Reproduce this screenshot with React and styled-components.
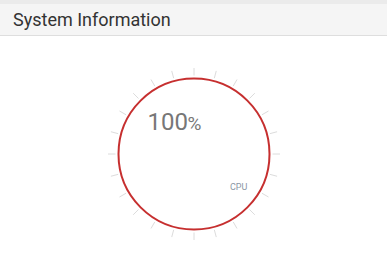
import React from "react";
import styled, { createGlobalStyle } from "styled-components";

const Global = createGlobalStyle`
  html, body { margin: 0; padding: 0; background: #ffffff; }
  body { font-family: Roboto, "Liberation Sans", sans-serif; }
`;

const Page = styled.div`
  display: flex;
  flex-direction: column;
  width: 387px;
  height: 276px;
  background: #ffffff;
  border-top: 4px solid #ebebeb;
  box-sizing: border-box;
`;

const Header = styled.div`
  height: 31px;
  display: flex;
  align-items: center;
  padding: 0 13px;
  background: #f5f5f5;
  border-bottom: 1px solid #dedede;
`;

const Title = styled.h2`
  margin: 0;
  font-family: Roboto, "Liberation Sans", sans-serif;
  font-weight: 400;
  font-size: 18px;
  color: #333333;
`;

const Body = styled.div`
  display: flex;
  justify-content: center;
  padding-top: 28px;
`;

const GaugeSvg = styled.svg`
  display: block;
  overflow: visible;
`;

const Value = styled.text`
  font-family: Roboto, "Liberation Sans", sans-serif;
  fill: #777777;
  font-size: ${(p) => p.$size}px;
`;

const Label = styled.text`
  font-family: Roboto, "Liberation Sans", sans-serif;
  fill: #8a96a4;
  font-size: 9px;
`;

function Gauge() {
  const c = 90;
  const ticks = [];
  for (let i = 0; i < 24; i++) {
    const a = (i * 15 * Math.PI) / 180;
    const x1 = c + Math.sin(a) * 78.5;
    const y1 = c - Math.cos(a) * 78.5;
    const x2 = c + Math.sin(a) * 86;
    const y2 = c - Math.cos(a) * 86;
    ticks.push(
      <line key={i} x1={x1} y1={y1} x2={x2} y2={y2} stroke="#dcdcdc" strokeWidth="1" />
    );
  }
  return (
    <GaugeSvg width="180" height="180" viewBox="0 0 180 180">
      {ticks}
      <circle cx={c} cy={c} r="75.5" fill="none" stroke="#c62f2f" strokeWidth="2" />
      <Value $size={24} x={c - 46.5} y={c - 24}>100</Value>
      <Value $size={19} x={c - 6.5} y={c - 24}>%</Value>
      <Label x={c + 36} y={c + 35.5}>CPU</Label>
    </GaugeSvg>
  );
}

export default function App() {
  return (
    <>
      <Global />
      <Page>
        <Header>
          <Title>System Information</Title>
        </Header>
        <Body>
          <Gauge />
        </Body>
      </Page>
    </>
  );
}
